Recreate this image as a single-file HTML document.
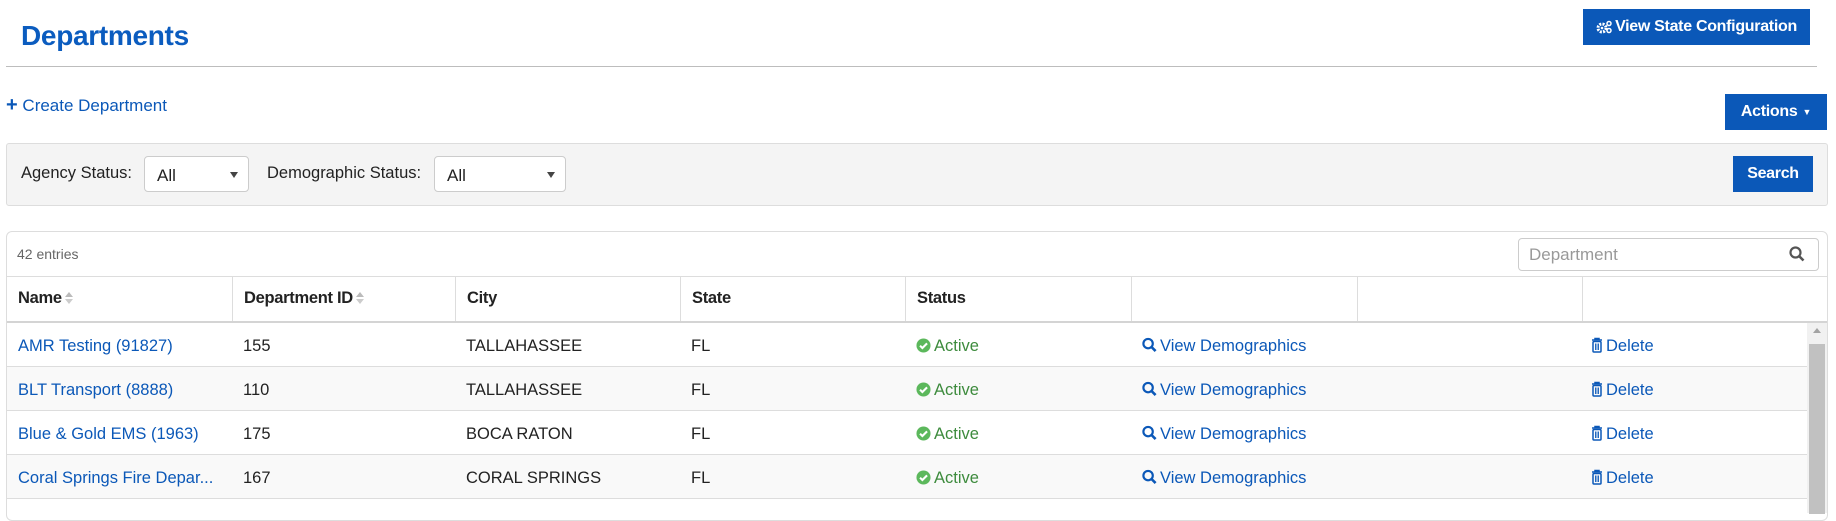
<!DOCTYPE html>
<html><head><meta charset="utf-8"><style>
*{box-sizing:border-box;margin:0;padding:0}
body{width:1836px;height:505px;overflow:hidden;background:#fff;font-family:"Liberation Sans",Arial,sans-serif;color:#222;position:relative}
.abs{position:absolute}
h1{position:absolute;left:21px;top:20px;font-size:28px;font-weight:bold;color:#0b5cbf;letter-spacing:-0.3px}
.btn{position:absolute;background:#0b58b8;color:#fff;font-weight:bold;font-size:16px;display:flex;align-items:center;justify-content:center;letter-spacing:-0.3px}
.link{color:#0b58b8}
.lbl{position:absolute;font-size:16.5px;color:#222}
.sel{position:absolute;background:#fff;border:1px solid #ccc;border-radius:4px;height:36px;font-size:17px;padding:9px 12px;color:#222}
.sel:after{content:"";position:absolute;right:10px;top:15px;border-left:4px solid transparent;border-right:4px solid transparent;border-top:6px solid #444}
.hcell{position:absolute;top:277px;height:45px;border-left:1px solid #ddd;font-weight:bold;font-size:16.5px;padding:12px 11px;letter-spacing:-0.3px}
.row{position:absolute;left:7px;width:1800px;height:44px;border-bottom:1px solid #ddd;font-size:16.5px}
.c{position:absolute;top:14px;white-space:nowrap}
.sort{display:inline-block;width:8px;height:12px;position:relative;margin-left:3px;vertical-align:-1px}
.sort:before{content:"";position:absolute;top:0;left:0;border-left:4px solid transparent;border-right:4px solid transparent;border-bottom:5px solid #bbb}
.sort:after{content:"";position:absolute;bottom:0;left:0;border-left:4px solid transparent;border-right:4px solid transparent;border-top:5px solid #ccc}
.green{color:#3d8b3d}
svg{vertical-align:-2px;margin-right:3px}
</style></head><body>
<h1>Departments</h1>
<div class="abs" style="left:6px;top:66px;width:1811px;height:1px;background:#bdbdbd"></div>
<div class="btn" style="left:1583px;top:9px;width:227px;height:36px">
<svg width="16" height="14" viewBox="0 0 16 14"><circle cx="6" cy="8" r="4" fill="none" stroke="#fff" stroke-width="3" stroke-dasharray="2 1.2"/><circle cx="6" cy="8" r="1.3" fill="#fff"/><circle cx="13" cy="3.5" r="2" fill="none" stroke="#fff" stroke-width="1.5"/><circle cx="13" cy="10.5" r="2" fill="none" stroke="#fff" stroke-width="1.5"/></svg>View State Configuration</div>
<div class="abs link" style="left:6px;top:96px;font-size:17px"><b style="font-size:20px;line-height:17px">+</b> Create Department</div>
<div class="btn" style="left:1725px;top:94px;width:102px;height:36px">Actions <span style="font-size:9px;margin-left:5px">▼</span></div>
<div class="abs" style="left:6px;top:143px;width:1822px;height:63px;background:#f4f4f4;border:1px solid #ddd;border-radius:3px"></div>
<div class="lbl" style="left:21px;top:164px">Agency Status:</div>
<div class="sel" style="left:144px;top:156px;width:105px">All</div>
<div class="lbl" style="left:267px;top:164px">Demographic Status:</div>
<div class="sel" style="left:434px;top:156px;width:132px">All</div>
<div class="btn" style="left:1733px;top:156px;width:80px;height:36px">Search</div>

<div class="abs" style="left:6px;top:231px;width:1822px;height:290px;border:1px solid #ddd;border-radius:6px"></div>
<div class="abs" style="left:17px;top:246px;font-size:14px;color:#666">42 entries</div>
<div class="abs" style="left:1518px;top:238px;width:301px;height:33px;border:1px solid #ccc;border-radius:4px;font-size:17px;color:#999;padding:6px 10px;background:#fff">Department</div>
<svg class="abs" style="left:1789px;top:246px" width="16" height="16" viewBox="0 0 16 16"><circle cx="6.5" cy="6.5" r="5" fill="none" stroke="#555" stroke-width="2.2"/><path d="M10 10l4.5 4.5" stroke="#555" stroke-width="2.6"/></svg>

<div class="abs" style="left:7px;top:276px;width:1820px;height:1px;background:#ddd"></div>
<div class="hcell" style="left:7px;width:225px;border-left:0">Name<i class="sort"></i></div>
<div class="hcell" style="left:232px;width:223px">Department ID<i class="sort"></i></div>
<div class="hcell" style="left:455px;width:225px">City</div>
<div class="hcell" style="left:680px;width:225px">State</div>
<div class="hcell" style="left:905px;width:226px">Status</div>
<div class="hcell" style="left:1131px;width:226px"></div>
<div class="hcell" style="left:1357px;width:225px"></div>
<div class="hcell" style="left:1582px;width:245px"></div>
<div class="abs" style="left:7px;top:321px;width:1820px;height:2px;background:#d4d4d4"></div>

<div class="row" style="top:323px;background:#fff"><span class="c link" style="left:11px">AMR Testing (91827)</span><span class="c" style="left:236px">155</span><span class="c" style="left:459px">TALLAHASSEE</span><span class="c" style="left:684px">FL</span><span class="c green" style="left:909px"><svg width="15" height="15" viewBox="0 0 16 16"><circle cx="8" cy="8" r="7.5" fill="#5cb85c"/><path d="M4.3 8.2l2.5 2.5 5-5" stroke="#fff" stroke-width="2.2" fill="none"/></svg>Active</span><span class="c link" style="left:1135px"><svg width="15" height="16" viewBox="0 0 16 16"><circle cx="6.5" cy="6.5" r="5" fill="none" stroke="#0b58b8" stroke-width="2.3"/><path d="M10 10l4.5 4.5" stroke="#0b58b8" stroke-width="2.8"/></svg>View Demographics</span><span class="c link" style="left:1584px"><svg width="12" height="16" viewBox="0 0 12 16"><path d="M1 3h10M4 3V1.5h4V3" stroke="#0b58b8" stroke-width="1.5" fill="none"/><rect x="2" y="4.5" width="8" height="10.5" rx="1" fill="none" stroke="#0b58b8" stroke-width="1.5"/><path d="M4.5 6.5v6.5M6 6.5v6.5M7.5 6.5v6.5" stroke="#0b58b8" stroke-width="0.9"/></svg>Delete</span></div>

<div class="row" style="top:367px;background:#f9f9f9"><span class="c link" style="left:11px">BLT Transport (8888)</span><span class="c" style="left:236px">110</span><span class="c" style="left:459px">TALLAHASSEE</span><span class="c" style="left:684px">FL</span><span class="c green" style="left:909px"><svg width="15" height="15" viewBox="0 0 16 16"><circle cx="8" cy="8" r="7.5" fill="#5cb85c"/><path d="M4.3 8.2l2.5 2.5 5-5" stroke="#fff" stroke-width="2.2" fill="none"/></svg>Active</span><span class="c link" style="left:1135px"><svg width="15" height="16" viewBox="0 0 16 16"><circle cx="6.5" cy="6.5" r="5" fill="none" stroke="#0b58b8" stroke-width="2.3"/><path d="M10 10l4.5 4.5" stroke="#0b58b8" stroke-width="2.8"/></svg>View Demographics</span><span class="c link" style="left:1584px"><svg width="12" height="16" viewBox="0 0 12 16"><path d="M1 3h10M4 3V1.5h4V3" stroke="#0b58b8" stroke-width="1.5" fill="none"/><rect x="2" y="4.5" width="8" height="10.5" rx="1" fill="none" stroke="#0b58b8" stroke-width="1.5"/><path d="M4.5 6.5v6.5M6 6.5v6.5M7.5 6.5v6.5" stroke="#0b58b8" stroke-width="0.9"/></svg>Delete</span></div>

<div class="row" style="top:411px;background:#fff"><span class="c link" style="left:11px">Blue &amp; Gold EMS (1963)</span><span class="c" style="left:236px">175</span><span class="c" style="left:459px">BOCA RATON</span><span class="c" style="left:684px">FL</span><span class="c green" style="left:909px"><svg width="15" height="15" viewBox="0 0 16 16"><circle cx="8" cy="8" r="7.5" fill="#5cb85c"/><path d="M4.3 8.2l2.5 2.5 5-5" stroke="#fff" stroke-width="2.2" fill="none"/></svg>Active</span><span class="c link" style="left:1135px"><svg width="15" height="16" viewBox="0 0 16 16"><circle cx="6.5" cy="6.5" r="5" fill="none" stroke="#0b58b8" stroke-width="2.3"/><path d="M10 10l4.5 4.5" stroke="#0b58b8" stroke-width="2.8"/></svg>View Demographics</span><span class="c link" style="left:1584px"><svg width="12" height="16" viewBox="0 0 12 16"><path d="M1 3h10M4 3V1.5h4V3" stroke="#0b58b8" stroke-width="1.5" fill="none"/><rect x="2" y="4.5" width="8" height="10.5" rx="1" fill="none" stroke="#0b58b8" stroke-width="1.5"/><path d="M4.5 6.5v6.5M6 6.5v6.5M7.5 6.5v6.5" stroke="#0b58b8" stroke-width="0.9"/></svg>Delete</span></div>

<div class="row" style="top:455px;background:#f9f9f9"><span class="c link" style="left:11px">Coral Springs Fire Depar...</span><span class="c" style="left:236px">167</span><span class="c" style="left:459px">CORAL SPRINGS</span><span class="c" style="left:684px">FL</span><span class="c green" style="left:909px"><svg width="15" height="15" viewBox="0 0 16 16"><circle cx="8" cy="8" r="7.5" fill="#5cb85c"/><path d="M4.3 8.2l2.5 2.5 5-5" stroke="#fff" stroke-width="2.2" fill="none"/></svg>Active</span><span class="c link" style="left:1135px"><svg width="15" height="16" viewBox="0 0 16 16"><circle cx="6.5" cy="6.5" r="5" fill="none" stroke="#0b58b8" stroke-width="2.3"/><path d="M10 10l4.5 4.5" stroke="#0b58b8" stroke-width="2.8"/></svg>View Demographics</span><span class="c link" style="left:1584px"><svg width="12" height="16" viewBox="0 0 12 16"><path d="M1 3h10M4 3V1.5h4V3" stroke="#0b58b8" stroke-width="1.5" fill="none"/><rect x="2" y="4.5" width="8" height="10.5" rx="1" fill="none" stroke="#0b58b8" stroke-width="1.5"/><path d="M4.5 6.5v6.5M6 6.5v6.5M7.5 6.5v6.5" stroke="#0b58b8" stroke-width="0.9"/></svg>Delete</span></div>

<div class="abs" style="left:1807px;top:323px;width:20px;height:190px;background:#f1f1f1"></div>
<div class="abs" style="left:1809px;top:344px;width:16px;height:170px;background:#c1c1c1"></div>
<div class="abs" style="left:1813px;top:328px;border-left:4px solid transparent;border-right:4px solid transparent;border-bottom:5px solid #a3a3a3"></div>
</body></html>
